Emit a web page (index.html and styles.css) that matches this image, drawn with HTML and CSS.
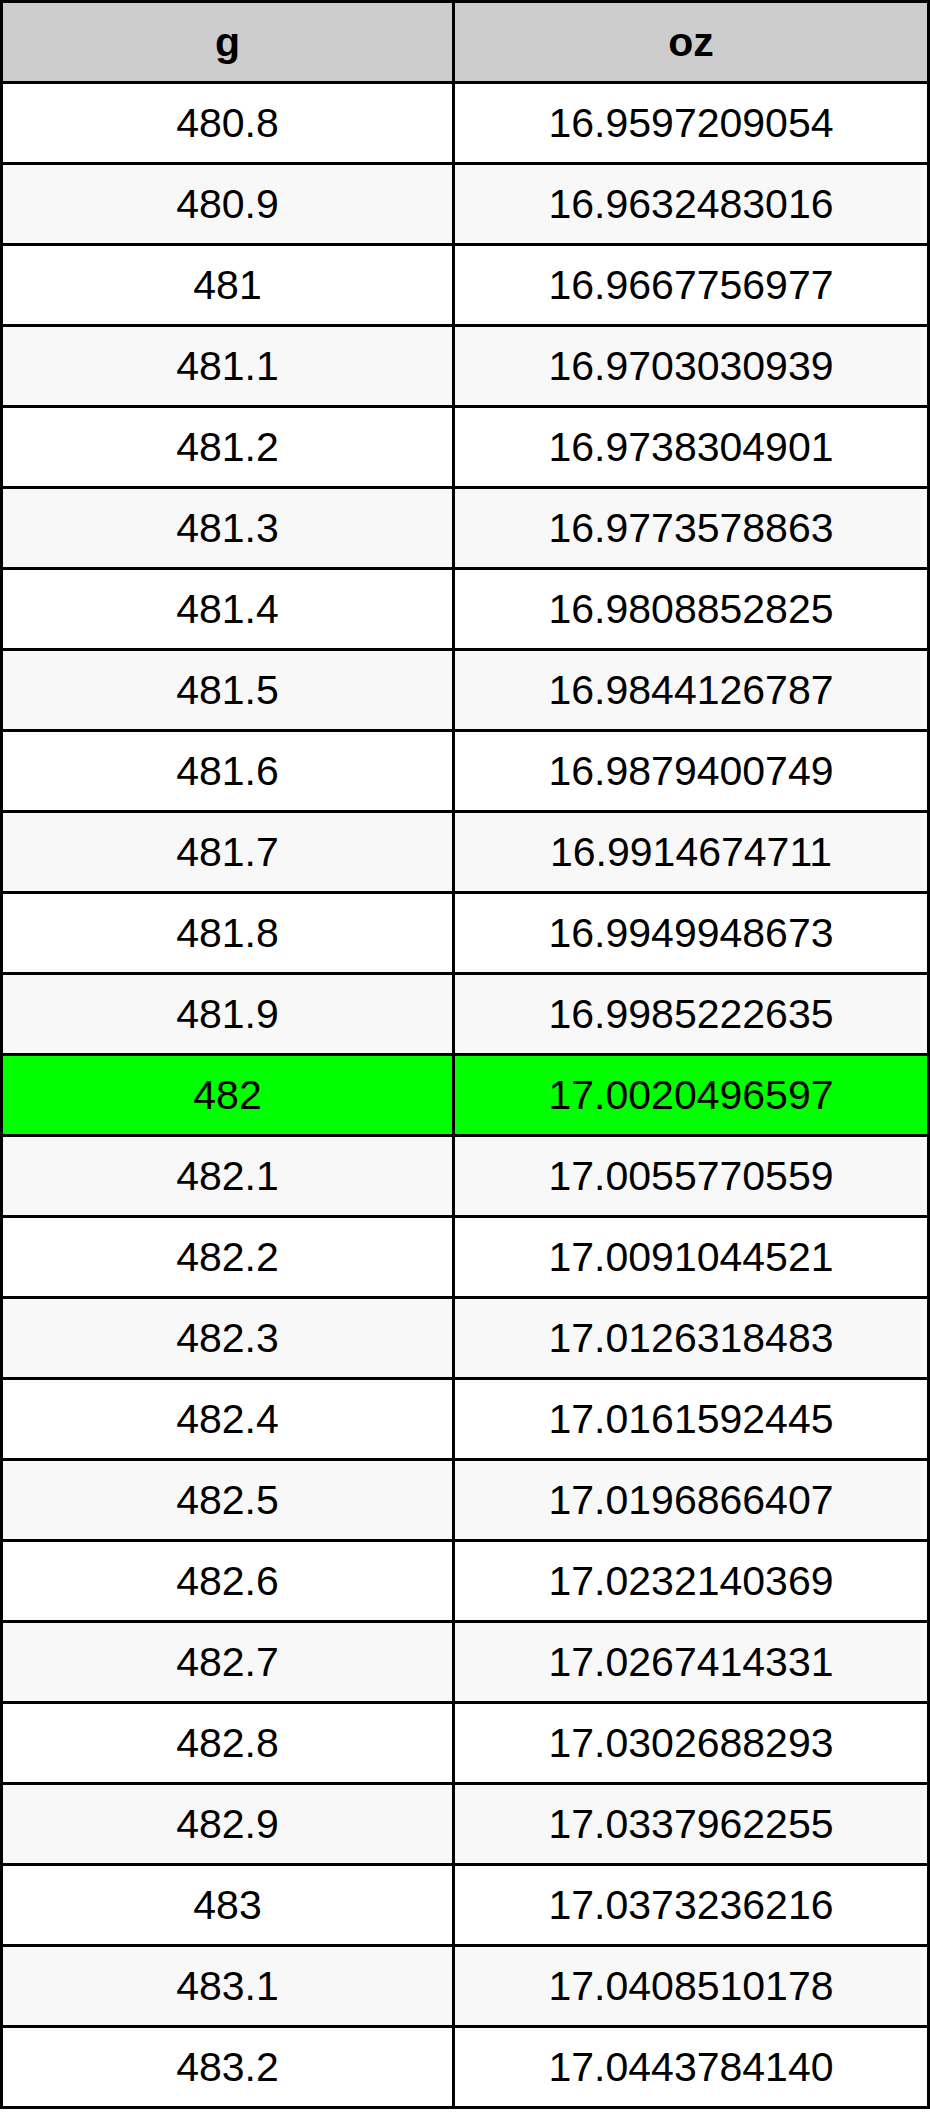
FILE: index.html
```html
<!DOCTYPE html>
<html>
<head>
<meta charset="utf-8">
<link rel="stylesheet" href="styles.css">
</head>
<body>
<table class="conv">
<thead>
<tr><th class="c1">g</th><th class="c2">oz</th></tr>
</thead>
<tbody>
<tr><td>480.8</td><td>16.9597209054</td></tr>
<tr class="alt"><td>480.9</td><td>16.9632483016</td></tr>
<tr><td>481</td><td>16.9667756977</td></tr>
<tr class="alt"><td>481.1</td><td>16.9703030939</td></tr>
<tr><td>481.2</td><td>16.9738304901</td></tr>
<tr class="alt"><td>481.3</td><td>16.9773578863</td></tr>
<tr><td>481.4</td><td>16.9808852825</td></tr>
<tr class="alt"><td>481.5</td><td>16.9844126787</td></tr>
<tr><td>481.6</td><td>16.9879400749</td></tr>
<tr class="alt"><td>481.7</td><td>16.9914674711</td></tr>
<tr><td>481.8</td><td>16.9949948673</td></tr>
<tr class="alt"><td>481.9</td><td>16.9985222635</td></tr>
<tr class="hl"><td>482</td><td>17.0020496597</td></tr>
<tr class="alt"><td>482.1</td><td>17.0055770559</td></tr>
<tr><td>482.2</td><td>17.0091044521</td></tr>
<tr class="alt"><td>482.3</td><td>17.0126318483</td></tr>
<tr><td>482.4</td><td>17.0161592445</td></tr>
<tr class="alt"><td>482.5</td><td>17.0196866407</td></tr>
<tr><td>482.6</td><td>17.0232140369</td></tr>
<tr class="alt"><td>482.7</td><td>17.0267414331</td></tr>
<tr><td>482.8</td><td>17.0302688293</td></tr>
<tr class="alt"><td>482.9</td><td>17.0337962255</td></tr>
<tr><td>483</td><td>17.0373236216</td></tr>
<tr class="alt"><td>483.1</td><td>17.0408510178</td></tr>
<tr><td>483.2</td><td>17.0443784140</td></tr>
</tbody>
</table>
</body>
</html>
```
FILE: styles.css
```css
html, body {
  margin: 0;
  padding: 0;
  background: #ffffff;
}
.conv {
  border-collapse: separate;
  border-spacing: 3px;
  background: #000000;
  width: 930px;
  table-layout: fixed;
  font-family: "Liberation Sans", Arial, sans-serif;
  font-size: 41px;
  color: #000000;
}
.conv th, .conv td {
  padding: 0;
  height: 78px;
  text-align: center;
  vertical-align: middle;
  background: #ffffff;
  line-height: 1;
}
.conv th {
  background: #cccccc;
  font-weight: bold;
}
.conv .c1 { width: 449px; }
.conv .c2 { width: 472px; }
.conv tr.alt td { background: #f8f8f8; }
.conv tr.hl td { background: #00ff00; }
```
